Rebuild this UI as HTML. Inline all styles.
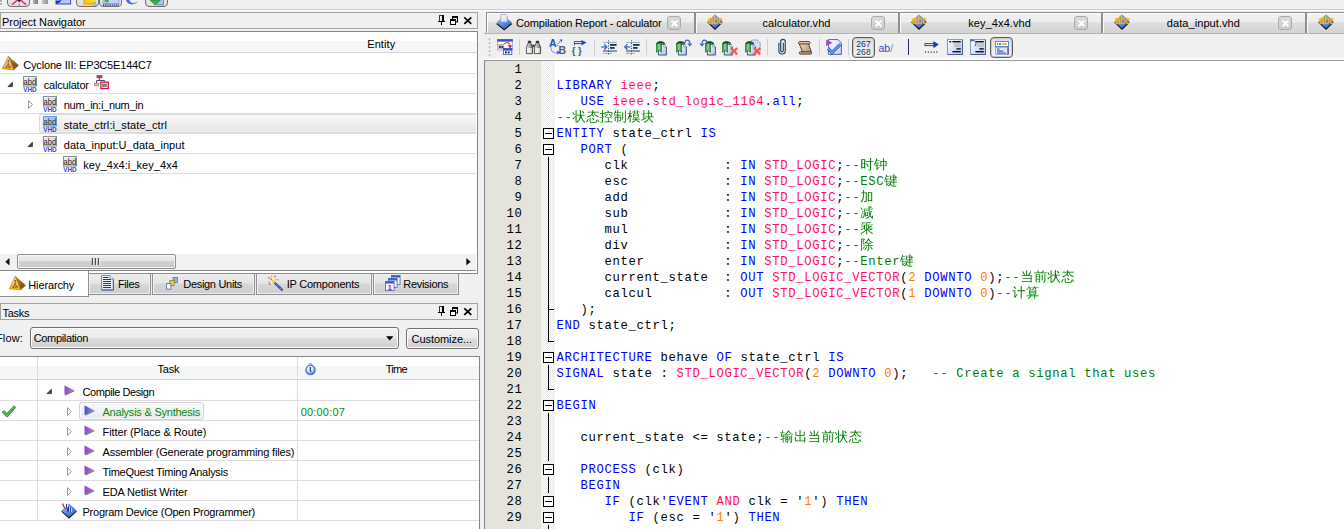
<!DOCTYPE html>
<html><head><meta charset="utf-8"><title>Quartus II</title><style>
*{box-sizing:border-box;margin:0;padding:0}
html,body{width:1344px;height:529px;overflow:hidden;background:#f0f0f0}
body{position:relative;font-family:"Liberation Sans", "Noto Sans CJK SC", sans-serif;font-size:11px;color:#000}
.a{position:absolute}
svg{overflow:visible}
.t{position:absolute;white-space:pre;line-height:14px;height:14px}
.code{position:absolute;white-space:pre;font-family:"Liberation Mono", "WenQuanYi Zen Hei", monospace;font-size:12.2px;letter-spacing:.68px;line-height:16px;height:16px;left:556.5px}
.ln{position:absolute;white-space:pre;font-family:"Liberation Mono", "WenQuanYi Zen Hei", monospace;font-size:12.2px;letter-spacing:.68px;line-height:16px;height:16px;text-align:right;width:38px;left:484.6px;color:#000}
.k{color:#0000ff}.y{color:#ff1060}.c{color:#008000}.n{color:#ff8000}
.cj{font-size:13.33px;letter-spacing:.35px}
.hl{position:absolute;height:1px;background:#dedede}
.tab{position:absolute;top:12px;height:21px;border:1px solid #8c8e94;border-bottom:none;box-shadow:inset 1px 1px 0 #fbfbfb;background:linear-gradient(#f3f3f3 0,#ececec 45%,#dddddd 50%,#d3d3d3 100%)}
.btab{position:absolute;top:273px;height:22px;border:1px solid #8c8e94;box-shadow:inset 1px 0 0 #f6f6f6,inset -1px -1px 0 #efefef;background:linear-gradient(#ececec 0,#e5e5e5 45%,#d7d7d7 50%,#cdcdcd 100%)}
.cb{position:absolute;width:14px;height:14px;border:1px solid #ababab;border-radius:3px;background:linear-gradient(#dcdcdc,#cbcbcb)}
.btn{position:absolute;border:1px solid #707070;border-radius:3px;box-shadow:inset 0 0 0 1px #fcfcfc;background:linear-gradient(#f2f2f2 0,#ebebeb 48%,#dddddd 52%,#cfcfcf 100%)}
</style></head><body>
<div class="a" style="left:0px;top:9px;width:1344px;height:1px;background:#cdcdcd;"></div>
<div class="a" style="left:0px;top:10px;width:1344px;height:1px;background:#fbfbfb;"></div>
<div class="a" style="left:0px;top:0px;width:2px;height:2px;background:#b0b0b0;"></div>
<div class="a" style="left:0px;top:3px;width:2px;height:2px;background:#b0b0b0;"></div>
<div class="a" style="left:7px;top:-10px;width:23px;height:17px;border:1px solid #707070;border-radius:4px;background:linear-gradient(#f4f4f4,#dcdcdc)"></div>
<svg class="a" style="left:12px;top:0px" width="15" height="6" viewBox="0 0 15 6"><path d="M0 4.600L5.600 0M14 4.600L8.400 0" stroke="#f03068" stroke-width="1.600"/><polygon points="5,0 9.400,0 7.200,2.600" fill="#1c2c6c"/><rect x="6.600" y="4" width="1.200" height="1.400" fill="#f03068"/></svg>
<div class="a" style="left:33px;top:0px;width:5px;height:4px;background:linear-gradient(90deg,#b0b0b0,#787878);"></div>
<div class="a" style="left:42px;top:0px;width:6px;height:4px;background:linear-gradient(90deg,#c8c8c8,#909090);"></div>
<svg class="a" style="left:56px;top:0px" width="15" height="5" viewBox="0 0 15 5"><rect x="0" y="-2" width="14.600" height="6" fill="#b4c8f0" stroke="#2c48c0" stroke-width="1"/><polygon points="0,4 0,1 6,0 3,3" fill="#1c38b0"/></svg>
<div class="a" style="left:76px;top:-10px;width:23px;height:17px;border:1px solid #707070;border-radius:4px;background:linear-gradient(#f4f4f4,#dcdcdc)"></div>
<svg class="a" style="left:83px;top:0px" width="13" height="6" viewBox="0 0 13 6"><polygon points="0,0 12.600,0 12.600,3 8,5 0,5" fill="#f8b818"/><polygon points="3,0 12.600,0 12.600,2 6,3" fill="#fcd848"/><circle cx="11.600" cy="4.400" r="1.300" fill="#fff" stroke="#3c4c7c" stroke-width=".6"/></svg>
<div class="a" style="left:99px;top:-10px;width:23px;height:17px;border:1px solid #707070;border-radius:4px;background:linear-gradient(#f4f4f4,#dcdcdc)"></div>
<svg class="a" style="left:103px;top:0px" width="16" height="6" viewBox="0 0 16 6"><rect x="0" y="-1" width="16" height="4.600" fill="#c4d4f4" stroke="#6c84c0" stroke-width=".6"/><rect x="1.600" y="0" width="4" height="2.400" fill="#4ca85c"/><path d="M0 5h16" stroke="#1c34c0" stroke-width="1.300" stroke-dasharray="1.300 .9"/></svg>
<svg class="a" style="left:126px;top:0px" width="13" height="5" viewBox="0 0 13 5"><path d="M0 0c1 5 8 6 12 1.600C8 4 4 3 3.400 0z" fill="#4c70d0"/></svg>
<div class="a" style="left:145px;top:-10px;width:23px;height:17px;border:1px solid #707070;border-radius:4px;background:linear-gradient(#f4f4f4,#dcdcdc)"></div>
<svg class="a" style="left:150px;top:0px" width="14" height="6" viewBox="0 0 14 6"><rect x="7" y="-1" width="6.600" height="6" fill="#a8c0f0" stroke="#4c68b0" stroke-width=".6"/><polygon points="0,0 10.400,0 5.200,5.200" fill="#3cb04c" stroke="#1c7c2c" stroke-width=".6"/></svg>
<div class="a" style="left:0;top:12px;width:478px;height:17px;border:1px solid #a3a3a3;background:#f0f0f0"></div>
<div class="t" style="left:2px;top:15px;letter-spacing:-0.037px">Project Navigator</div>
<svg class="a" style="left:437px;top:15px" width="9" height="11" viewBox="0 0 9 11"><rect x="2.5" y=".5" width="4" height="6" fill="#e8ecf0" stroke="#2c3844" stroke-width="1"/><rect x="5" y="0" width="2" height="7" fill="#000"/><rect x="1" y="6" width="7" height="1" fill="#000"/><rect x="4" y="7" width="1" height="3" fill="#000"/></svg><svg class="a" style="left:450px;top:16px" width="9" height="9" viewBox="0 0 9 9"><rect x="2.5" y="1" width="5" height="5" fill="#f0f0f0" stroke="#000"/><rect x="2" y="0" width="6" height="2" fill="#000"/><rect x=".5" y="4" width="5" height="4.5" fill="#fff" stroke="#000"/><rect x="0" y="3" width="6" height="2" fill="#000"/></svg><svg class="a" style="left:463px;top:16px" width="10" height="9" viewBox="0 0 10 9"><path d="M1.3 1.3l7 6.6M8.3 1.3l-7 6.6" stroke="#000" stroke-width="1.7"/></svg>
<div class="a" style="left:-1px;top:31px;width:479px;height:243px;border:1px solid #828790;background:#fff"></div>
<div class="a" style="left:0px;top:41px;width:477px;height:11px;background:#f5f6f8;"></div>
<div class="a" style="left:0px;top:52px;width:477px;height:1px;background:#d5d5d5;"></div>
<div class="t" style="left:367.25px;top:37px;letter-spacing:0.081px">Entity</div>
<div class="hl" style="left:0;top:73px;width:476px"></div>
<div class="hl" style="left:0;top:93px;width:476px"></div>
<div class="hl" style="left:0;top:113px;width:476px"></div>
<div class="hl" style="left:0;top:133px;width:476px"></div>
<div class="hl" style="left:0;top:153px;width:476px"></div>
<div class="hl" style="left:0;top:173px;width:476px"></div>
<div class="a" style="left:39px;top:114px;width:437px;height:19px;border:1px solid #dcdcdc;border-right:none;border-radius:3px 0 0 3px;box-shadow:inset 1px 1px 0 #f8f8f8,inset 0 -1px 0 #f0f0f0;background:linear-gradient(#f9f9f9,#e5e5e5)"></div>
<div class="t" style="left:23.25px;top:58px;letter-spacing:-0.174px">Cyclone III: EP3C5E144C7</div>
<div class="t" style="left:43.75px;top:78px;letter-spacing:-0.208px">calculator</div>
<div class="t" style="left:63.75px;top:98px;letter-spacing:-0.285px">num_in:i_num_in</div>
<div class="t" style="left:63.75px;top:118px;letter-spacing:0.103px">state_ctrl:i_state_ctrl</div>
<div class="t" style="left:63.75px;top:138px;letter-spacing:0.037px">data_input:U_data_input</div>
<div class="t" style="left:83.25px;top:158px;letter-spacing:0.070px">key_4x4:i_key_4x4</div>
<svg class="a" style="left:2px;top:56px" width="17" height="15" viewBox="0 0 17 15"><defs><linearGradient id="g1" x1="0" y1="0" x2="0" y2="1"><stop offset="0" stop-color="#fff27a"/><stop offset="1" stop-color="#f5a800"/></linearGradient><linearGradient id="g2" x1="0" y1="0" x2="1" y2="1"><stop offset="0" stop-color="#d08a20"/><stop offset="1" stop-color="#6a3c08"/></linearGradient></defs><polygon points="6.2,0.5 11.8,13.8 16.5,9.3" fill="url(#g2)" stroke="#7a5a30" stroke-width=".6"/><polygon points="6.2,0.5 0.4,12.8 11.8,13.8" fill="url(#g1)" stroke="#a08040" stroke-width=".7"/><path d="M6.2 5v3M6.2 8l-2 3M6.2 8l2 3" stroke="#3040c0" stroke-width=".8" fill="none"/><rect x="5.6" y="4" width="1.3" height="1.3" fill="#e02020"/><rect x="3.6" y="10.5" width="1.3" height="1.3" fill="#e02020"/><rect x="7.6" y="10.5" width="1.3" height="1.3" fill="#e02020"/><rect x="5.6" y="10.5" width="1.3" height="1.3" fill="#e02020"/></svg>
<svg class="a" style="left:23px;top:76px" width="15" height="16" viewBox="0 0 15 16"><defs><linearGradient id="g3" x1="0" y1="0" x2="1" y2="1"><stop offset="0" stop-color="#f4f7fc"/><stop offset="1" stop-color="#bdd0ec"/></linearGradient></defs><rect x=".5" y=".5" width="13" height="9.6" fill="url(#g3)" stroke="#8a9098"/><text x="7" y="8.7" font-family="Liberation Sans,sans-serif" font-size="9.4" text-anchor="middle" fill="#282828" textLength="12.8" lengthAdjust="spacingAndGlyphs">abd</text><text x="6.9" y="16" font-family="Liberation Sans,sans-serif" font-size="6.8" font-weight="bold" text-anchor="middle" fill="#2a4cc8" textLength="13.4" lengthAdjust="spacingAndGlyphs">VHD</text></svg>
<svg class="a" style="left:43px;top:96px" width="15" height="16" viewBox="0 0 15 16"><defs><linearGradient id="g4" x1="0" y1="0" x2="1" y2="1"><stop offset="0" stop-color="#f4f7fc"/><stop offset="1" stop-color="#bdd0ec"/></linearGradient></defs><rect x=".5" y=".5" width="13" height="9.6" fill="url(#g4)" stroke="#8a9098"/><text x="7" y="8.7" font-family="Liberation Sans,sans-serif" font-size="9.4" text-anchor="middle" fill="#282828" textLength="12.8" lengthAdjust="spacingAndGlyphs">abd</text><text x="6.9" y="16" font-family="Liberation Sans,sans-serif" font-size="6.8" font-weight="bold" text-anchor="middle" fill="#2a4cc8" textLength="13.4" lengthAdjust="spacingAndGlyphs">VHD</text></svg>
<svg class="a" style="left:43px;top:116px" width="15" height="16" viewBox="0 0 15 16"><defs><linearGradient id="g5" x1="0" y1="0" x2="1" y2="1"><stop offset="0" stop-color="#b8d4fa"/><stop offset="1" stop-color="#8ab6f0"/></linearGradient></defs><rect x=".5" y=".5" width="13" height="9.6" fill="url(#g5)" stroke="#6c9ce0"/><text x="7" y="8.7" font-family="Liberation Sans,sans-serif" font-size="9.4" text-anchor="middle" fill="#283848" textLength="12.8" lengthAdjust="spacingAndGlyphs">abd</text><text x="6.9" y="16" font-family="Liberation Sans,sans-serif" font-size="6.8" font-weight="bold" text-anchor="middle" fill="#2a4cc8" textLength="13.4" lengthAdjust="spacingAndGlyphs">VHD</text></svg>
<svg class="a" style="left:43px;top:136px" width="15" height="16" viewBox="0 0 15 16"><defs><linearGradient id="g6" x1="0" y1="0" x2="1" y2="1"><stop offset="0" stop-color="#f4f7fc"/><stop offset="1" stop-color="#bdd0ec"/></linearGradient></defs><rect x=".5" y=".5" width="13" height="9.6" fill="url(#g6)" stroke="#8a9098"/><text x="7" y="8.7" font-family="Liberation Sans,sans-serif" font-size="9.4" text-anchor="middle" fill="#282828" textLength="12.8" lengthAdjust="spacingAndGlyphs">abd</text><text x="6.9" y="16" font-family="Liberation Sans,sans-serif" font-size="6.8" font-weight="bold" text-anchor="middle" fill="#2a4cc8" textLength="13.4" lengthAdjust="spacingAndGlyphs">VHD</text></svg>
<svg class="a" style="left:63px;top:156px" width="15" height="16" viewBox="0 0 15 16"><defs><linearGradient id="g7" x1="0" y1="0" x2="1" y2="1"><stop offset="0" stop-color="#f4f7fc"/><stop offset="1" stop-color="#bdd0ec"/></linearGradient></defs><rect x=".5" y=".5" width="13" height="9.6" fill="url(#g7)" stroke="#8a9098"/><text x="7" y="8.7" font-family="Liberation Sans,sans-serif" font-size="9.4" text-anchor="middle" fill="#282828" textLength="12.8" lengthAdjust="spacingAndGlyphs">abd</text><text x="6.9" y="16" font-family="Liberation Sans,sans-serif" font-size="6.8" font-weight="bold" text-anchor="middle" fill="#2a4cc8" textLength="13.4" lengthAdjust="spacingAndGlyphs">VHD</text></svg>
<svg class="a" style="left:7px;top:81px" width="7" height="7" viewBox="0 0 7 7"><polygon points="5.4,1.2 5.4,5.6 1,5.6" fill="#484848" stroke="#2c2c2c" stroke-width=".8"/></svg>
<svg class="a" style="left:28px;top:100px" width="6" height="9" viewBox="0 0 6 9"><polygon points="0.5,0.5 4.5,4.5 0.5,8.5" fill="#fff" stroke="#989898" stroke-width="1"/></svg>
<svg class="a" style="left:27px;top:141px" width="7" height="7" viewBox="0 0 7 7"><polygon points="5.4,1.2 5.4,5.6 1,5.6" fill="#484848" stroke="#2c2c2c" stroke-width=".8"/></svg>
<svg class="a" style="left:94px;top:75px" width="16" height="15" viewBox="0 0 16 15"><path d="M5.5 2.5v3M2.5 8.5v-3h8v3" stroke="#44546a" stroke-width="1" fill="none"/><rect x="3" y=".5" width="5" height="2.4" fill="#e8204a" stroke="#5a6070" stroke-width=".7"/><rect x=".4" y="8.2" width="4.4" height="2.6" fill="#f4d63c" stroke="#707890" stroke-width=".7"/><rect x="6.9" y="7.1" width="7.4" height="6.4" fill="#fff" stroke="#e8003c" stroke-width="1.25"/><rect x="8.6" y="9" width="4" height="2.8" fill="#58a868" stroke="#507070" stroke-width=".6"/></svg>
<div class="a" style="left:0px;top:254px;width:476px;height:16px;background:#f1f1f1;"></div>
<div class="a" style="left:0px;top:270px;width:476px;height:1px;background:#828790;"></div>
<div class="a" style="left:17px;top:254px;width:159px;height:15px;border:1px solid #8e8e8e;border-radius:2px;box-shadow:inset 0 0 0 1px #f4f4f4;background:linear-gradient(#eeeeee 0,#e4e4e4 45%,#d1d1d1 50%,#c8c8c8 100%)"></div>
<svg class="a" style="left:5px;top:258px" width="5" height="8" viewBox="0 0 5 8"><polygon points="4.5,0 4.5,7.5 0.3,3.75" fill="#111"/></svg>
<svg class="a" style="left:466px;top:258px" width="5" height="8" viewBox="0 0 5 8"><polygon points="0.3,0 0.3,7.5 4.6,3.75" fill="#111"/></svg>
<svg class="a" style="left:92px;top:258px" width="9" height="8" viewBox="0 0 9 8"><rect x="-0.2" y="0" width="1.400" height="7" fill="#4c5056"/><rect x="1.2" y="0.5" width="1" height="7" fill="#f4f4f4"/><rect x="2.8" y="0" width="1.400" height="7" fill="#4c5056"/><rect x="4.2" y="0.5" width="1" height="7" fill="#f4f4f4"/><rect x="5.8" y="0" width="1.400" height="7" fill="#4c5056"/><rect x="7.2" y="0.5" width="1" height="7" fill="#f4f4f4"/></svg>
<div class="a" style="left:-1px;top:271px;width:90px;height:26px;border:1px solid #8c8e94;border-top:none;background:#fff"></div>
<div class="btab" style="left:88px;width:63px"></div>
<div class="btab" style="left:152px;width:103px"></div>
<div class="btab" style="left:256px;width:116px"></div>
<div class="btab" style="left:373px;width:86px"></div>
<div class="a" style="left:478px;top:272px;width:2px;height:26px;background:#f0f0f0;"></div>
<div class="t" style="left:28.25px;top:278px;letter-spacing:-0.120px">Hierarchy</div>
<div class="t" style="left:118px;top:277px;letter-spacing:-0.397px">Files</div>
<div class="t" style="left:183.25px;top:277px;letter-spacing:-0.301px">Design Units</div>
<div class="t" style="left:286.75px;top:277px;letter-spacing:-0.240px">IP Components</div>
<div class="t" style="left:403.25px;top:277px;letter-spacing:-0.299px">Revisions</div>
<svg class="a" style="left:9px;top:276px" width="17" height="15" viewBox="0 0 17 15"><defs><linearGradient id="g8" x1="0" y1="0" x2="0" y2="1"><stop offset="0" stop-color="#fff27a"/><stop offset="1" stop-color="#f5a800"/></linearGradient><linearGradient id="g9" x1="0" y1="0" x2="1" y2="1"><stop offset="0" stop-color="#d08a20"/><stop offset="1" stop-color="#6a3c08"/></linearGradient></defs><polygon points="6.2,0.5 11.8,13.8 16.5,9.3" fill="url(#g9)" stroke="#7a5a30" stroke-width=".6"/><polygon points="6.2,0.5 0.4,12.8 11.8,13.8" fill="url(#g8)" stroke="#a08040" stroke-width=".7"/><path d="M6.2 5v3M6.2 8l-2 3M6.2 8l2 3" stroke="#3040c0" stroke-width=".8" fill="none"/><rect x="5.6" y="4" width="1.3" height="1.3" fill="#e02020"/><rect x="3.6" y="10.5" width="1.3" height="1.3" fill="#e02020"/><rect x="7.6" y="10.5" width="1.3" height="1.3" fill="#e02020"/><rect x="5.6" y="10.5" width="1.3" height="1.3" fill="#e02020"/></svg>
<svg class="a" style="left:101px;top:275px" width="13" height="16" viewBox="0 0 13 16"><defs><linearGradient id="g10" x1="0" y1="0" x2="1" y2="1"><stop offset="0" stop-color="#fff"/><stop offset="1" stop-color="#dce6f8"/></linearGradient></defs><path d="M.6.6h8.4l3.4 3.4v11H.6z" fill="url(#g10)" stroke="#6078b8" stroke-width=".9"/><path d="M12.400 4v11H.6" fill="none" stroke="#3c5498" stroke-width=".9"/><path d="M9 .6v3.4h3.4" fill="#f4f7fe" stroke="#6078b8" stroke-width=".7"/><rect x="2" y="2" width="5.5" height="1" fill="#2030b4"/><rect x="2" y="4" width="8" height="1" fill="#2030b4"/><rect x="2" y="6" width="8" height="1" fill="#2030b4"/><rect x="2" y="8" width="8" height="1" fill="#2030b4"/><rect x="2" y="10" width="8" height="1" fill="#2030b4"/><rect x="2" y="12" width="8" height="1" fill="#2030b4"/></svg>
<svg class="a" style="left:166px;top:277px" width="12" height="13" viewBox="0 0 12 13"><rect x="7" y=".5" width="4.4" height="5" fill="#8cacdc" stroke="#5c78b0" stroke-width=".8"/><rect x="3.8" y="3.4" width="4.4" height="5" fill="#f6d030" stroke="#88803c" stroke-width=".8"/><rect x=".5" y="6.6" width="4.4" height="5.6" fill="#f4f8ff" stroke="#5a78b0" stroke-width=".9"/></svg>
<svg class="a" style="left:267px;top:275px" width="17" height="16" viewBox="0 0 17 16"><path d="M7.2 7.4l8.4 8" stroke="#2848b8" stroke-width="2.2"/><path d="M7.2 7.4l8.4 8" stroke="#9ab4f0" stroke-width="1" stroke-dasharray="1 1"/><path d="M5 5.2l3.6 1.2-1.6 2.2z" fill="#ffe020" stroke="#e8c000" stroke-width=".5"/><rect x="1.2" y="2.2" width="1.3" height="1.3" fill="#e03010"/><rect x="4" y="0.8" width="1.3" height="1.3" fill="#f08010"/><rect x="7.4" y="0.8" width="1.3" height="1.3" fill="#e03010"/><rect x="3.4" y="3.6" width="1.3" height="1.3" fill="#e03010"/><rect x="10.4" y="4.2" width="1.3" height="1.3" fill="#f08010"/><rect x="1.6" y="6.6" width="1.3" height="1.3" fill="#f08010"/><rect x="2.2" y="8.6" width="1.3" height="1.3" fill="#e03010"/><rect x="8.2" y="3.6" width="1.3" height="1.3" fill="#f0a020"/></svg>
<svg class="a" style="left:385px;top:275px" width="16" height="16" viewBox="0 0 16 16"><rect x="6.5" y="0.5" width="8.6" height="9" fill="#f4f7ff" stroke="#5a74b8" stroke-width=".9"/><rect x="6.5" y="0.5" width="8.6" height="2" fill="#3a5cc8"/><rect x="3.5" y="3.5" width="8.6" height="9" fill="#f4f7ff" stroke="#5a74b8" stroke-width=".9"/><rect x="3.5" y="3.5" width="8.6" height="2" fill="#3a5cc8"/><rect x="0.5" y="6.5" width="8.6" height="9" fill="#f4f7ff" stroke="#5a74b8" stroke-width=".9"/><rect x="0.5" y="6.5" width="8.6" height="2" fill="#3a5cc8"/><text x="4.8" y="14.6" font-family="Liberation Sans,sans-serif" font-size="7.5" font-weight="bold" text-anchor="middle" fill="#e0103c">1</text></svg>
<div class="a" style="left:0;top:303px;width:478px;height:17px;border:1px solid #a3a3a3;background:#f0f0f0"></div>
<div class="t" style="left:2.5px;top:306px;letter-spacing:-0.275px">Tasks</div>
<svg class="a" style="left:437px;top:306px" width="9" height="11" viewBox="0 0 9 11"><rect x="2.5" y=".5" width="4" height="6" fill="#e8ecf0" stroke="#2c3844" stroke-width="1"/><rect x="5" y="0" width="2" height="7" fill="#000"/><rect x="1" y="6" width="7" height="1" fill="#000"/><rect x="4" y="7" width="1" height="3" fill="#000"/></svg><svg class="a" style="left:450px;top:307px" width="9" height="9" viewBox="0 0 9 9"><rect x="2.5" y="1" width="5" height="5" fill="#f0f0f0" stroke="#000"/><rect x="2" y="0" width="6" height="2" fill="#000"/><rect x=".5" y="4" width="5" height="4.5" fill="#fff" stroke="#000"/><rect x="0" y="3" width="6" height="2" fill="#000"/></svg><svg class="a" style="left:463px;top:307px" width="10" height="9" viewBox="0 0 10 9"><path d="M1.3 1.3l7 6.6M8.3 1.3l-7 6.6" stroke="#000" stroke-width="1.7"/></svg>
<div class="t" style="left:-4px;top:331px;letter-spacing:0.144px">Flow:</div>
<div class="btn" style="left:30px;top:327px;width:369px;height:22px"></div>
<div class="t" style="left:33.75px;top:331px;letter-spacing:-0.349px">Compilation</div>
<svg class="a" style="left:386px;top:336px" width="8" height="5" viewBox="0 0 8 5"><polygon points="0,0.3 7.4,0.3 3.7,4.4" fill="#000"/></svg>
<div class="btn" style="left:406px;top:328px;width:73px;height:21px"></div>
<div class="t" style="left:411.5px;top:332px;letter-spacing:-0.053px">Customize...</div>
<div class="a" style="left:-1px;top:356px;width:481px;height:180px;border:1px solid #828790;background:#fff"></div>
<div class="a" style="left:0px;top:366px;width:479px;height:13px;background:#f5f6f8;"></div>
<div class="a" style="left:0px;top:379px;width:479px;height:1px;background:#d5d5d5;"></div>
<div class="hl" style="left:0;top:400px;width:479px"></div>
<div class="hl" style="left:0;top:420px;width:479px"></div>
<div class="hl" style="left:0;top:440px;width:479px"></div>
<div class="hl" style="left:0;top:460px;width:479px"></div>
<div class="hl" style="left:0;top:480px;width:479px"></div>
<div class="hl" style="left:0;top:500px;width:479px"></div>
<div class="hl" style="left:0;top:520px;width:479px"></div>
<div class="a" style="left:37px;top:357px;width:1px;height:164px;background:#dcdcdc;"></div>
<div class="a" style="left:297px;top:357px;width:1px;height:164px;background:#dcdcdc;"></div>
<div class="t" style="left:157.5px;top:362px;letter-spacing:-0.219px">Task</div>
<div class="t" style="left:385.75px;top:362px;letter-spacing:-0.699px">Time</div>
<svg class="a" style="left:305px;top:363px" width="11" height="12" viewBox="0 0 11 12"><defs><radialGradient id="g11" cx=".45" cy=".4" r=".6"><stop offset="0" stop-color="#fff"/><stop offset=".5" stop-color="#dce8ff"/><stop offset="1" stop-color="#2c58b0"/></radialGradient></defs><path d="M3.6 2.4l1-1.6h1.8l1 1.6" fill="none" stroke="#4a70b8" stroke-width=".9"/><circle cx="5.5" cy="7" r="4.7" fill="url(#g11)" stroke="#4a74c4" stroke-width="1.1"/><path d="M5.3 4v3.8l1 1.1" stroke="#1430a0" stroke-width="1.2" fill="none"/></svg>
<div class="a" style="left:79px;top:402px;width:125px;height:18px;border:1px solid #d4d4d4;border-radius:3px;box-shadow:inset 0 0 0 1px #fcfcfc;background:linear-gradient(#fafafa,#e9e9e9)"></div>
<div class="t" style="left:82.5px;top:385px;letter-spacing:-0.422px">Compile Design</div>
<div class="t" style="left:102.5px;top:405px;letter-spacing:-0.230px;color:#0a8a0a">Analysis &amp; Synthesis</div>
<div class="t" style="left:102.5px;top:425px;letter-spacing:-0.092px">Fitter (Place &amp; Route)</div>
<div class="t" style="left:102.5px;top:445px;letter-spacing:-0.183px">Assembler (Generate programming files)</div>
<div class="t" style="left:102.5px;top:465px;letter-spacing:-0.270px">TimeQuest Timing Analysis</div>
<div class="t" style="left:102.5px;top:485px;letter-spacing:-0.156px">EDA Netlist Writer</div>
<div class="t" style="left:82.5px;top:505px;letter-spacing:-0.245px">Program Device (Open Programmer)</div>
<div class="t" style="left:300.75px;top:405px;letter-spacing:0.178px;color:#0a8a0a">00:00:07</div>
<svg class="a" style="left:1.3px;top:405px" width="16" height="13" viewBox="0 0 16 13"><path d="M1 7.2l2.2-1.6 2.6 2.8L13 .8l1.8 1.6-8.6 9.8z" fill="#4cb848" stroke="#2f8a34" stroke-width=".8"/></svg>
<svg class="a" style="left:46px;top:388px" width="7" height="7" viewBox="0 0 7 7"><polygon points="5.4,1.2 5.4,5.6 1,5.6" fill="#484848" stroke="#2c2c2c" stroke-width=".8"/></svg>
<svg class="a" style="left:64px;top:385px" width="11" height="11" viewBox="0 0 11 11"><defs><linearGradient id="g12" x1="0" y1="0" x2="1" y2="0"><stop offset="0" stop-color="#7a50c8"/><stop offset="1" stop-color="#d070c8"/></linearGradient></defs><polygon points="1.3,2 11,6 1.3,10.8" fill="#585868" opacity=".75"/><polygon points=".5,.5 10,5.2 .5,9.8" fill="url(#g12)"/></svg>
<svg class="a" style="left:67px;top:407px" width="6" height="9" viewBox="0 0 6 9"><polygon points="0.5,0.5 4.5,4.5 0.5,8.5" fill="#fff" stroke="#989898" stroke-width="1"/></svg>
<svg class="a" style="left:84px;top:405px" width="11" height="11" viewBox="0 0 11 11"><defs><linearGradient id="g13" x1="0" y1="0" x2="1" y2="0"><stop offset="0" stop-color="#3a50e0"/><stop offset="1" stop-color="#b48ae0"/></linearGradient></defs><polygon points="1.3,2 11,6 1.3,10.8" fill="#585868" opacity=".75"/><polygon points=".5,.5 10,5.2 .5,9.8" fill="url(#g13)"/></svg>
<svg class="a" style="left:67px;top:427px" width="6" height="9" viewBox="0 0 6 9"><polygon points="0.5,0.5 4.5,4.5 0.5,8.5" fill="#fff" stroke="#989898" stroke-width="1"/></svg>
<svg class="a" style="left:84px;top:425px" width="11" height="11" viewBox="0 0 11 11"><defs><linearGradient id="g14" x1="0" y1="0" x2="1" y2="0"><stop offset="0" stop-color="#7a50c8"/><stop offset="1" stop-color="#d070c8"/></linearGradient></defs><polygon points="1.3,2 11,6 1.3,10.8" fill="#585868" opacity=".75"/><polygon points=".5,.5 10,5.2 .5,9.8" fill="url(#g14)"/></svg>
<svg class="a" style="left:67px;top:447px" width="6" height="9" viewBox="0 0 6 9"><polygon points="0.5,0.5 4.5,4.5 0.5,8.5" fill="#fff" stroke="#989898" stroke-width="1"/></svg>
<svg class="a" style="left:84px;top:445px" width="11" height="11" viewBox="0 0 11 11"><defs><linearGradient id="g15" x1="0" y1="0" x2="1" y2="0"><stop offset="0" stop-color="#7a50c8"/><stop offset="1" stop-color="#d070c8"/></linearGradient></defs><polygon points="1.3,2 11,6 1.3,10.8" fill="#585868" opacity=".75"/><polygon points=".5,.5 10,5.2 .5,9.8" fill="url(#g15)"/></svg>
<svg class="a" style="left:67px;top:467px" width="6" height="9" viewBox="0 0 6 9"><polygon points="0.5,0.5 4.5,4.5 0.5,8.5" fill="#fff" stroke="#989898" stroke-width="1"/></svg>
<svg class="a" style="left:84px;top:465px" width="11" height="11" viewBox="0 0 11 11"><defs><linearGradient id="g16" x1="0" y1="0" x2="1" y2="0"><stop offset="0" stop-color="#7a50c8"/><stop offset="1" stop-color="#d070c8"/></linearGradient></defs><polygon points="1.3,2 11,6 1.3,10.8" fill="#585868" opacity=".75"/><polygon points=".5,.5 10,5.2 .5,9.8" fill="url(#g16)"/></svg>
<svg class="a" style="left:67px;top:487px" width="6" height="9" viewBox="0 0 6 9"><polygon points="0.5,0.5 4.5,4.5 0.5,8.5" fill="#fff" stroke="#989898" stroke-width="1"/></svg>
<svg class="a" style="left:84px;top:485px" width="11" height="11" viewBox="0 0 11 11"><defs><linearGradient id="g17" x1="0" y1="0" x2="1" y2="0"><stop offset="0" stop-color="#7a50c8"/><stop offset="1" stop-color="#d070c8"/></linearGradient></defs><polygon points="1.3,2 11,6 1.3,10.8" fill="#585868" opacity=".75"/><polygon points=".5,.5 10,5.2 .5,9.8" fill="url(#g17)"/></svg>
<svg class="a" style="left:61px;top:503px" width="16" height="16" viewBox="0 0 16 16"><defs><linearGradient id="g18" x1="0" y1="0" x2="1" y2="1"><stop offset="0" stop-color="#9cc0f4"/><stop offset=".5" stop-color="#5a8ce0"/><stop offset="1" stop-color="#2c5cc0"/></linearGradient></defs><polygon points="8,1.8 15.8,8.6 8,15.8 0.2,8.6" fill="#141414"/><polygon points="8,0.4 15.6,7.4 8,14.2 0.4,7.4" fill="url(#g18)"/><path d="M1.5 .5l2 4.5h3v3.5" fill="none" stroke="#e0103c" stroke-width="1.2"/><path d="M4.4 .6v4M6.4 1.2v3.4M8.4 4v5M10.2 5v4" stroke="#fff" stroke-width="1"/><path d="M5.4 .8v4M7.4 3.4v5.4M9.3 4.6v4.4" stroke="#1828a0" stroke-width="1"/></svg>
<div class="a" style="left:484px;top:33px;width:860px;height:1px;background:#b4b4b4;"></div>
<div class="tab" style="left:486px;width:209px"></div>
<div class="tab" style="left:695px;width:204px"></div>
<div class="tab" style="left:899px;width:203px"></div>
<div class="tab" style="left:1102px;width:204px"></div>
<div class="tab" style="left:1306px;width:60px"></div>
<div class="t" style="left:516px;top:16px;letter-spacing:-0.178px">Compilation Report - calculator</div>
<div class="t" style="left:762.5px;top:16px;letter-spacing:0.052px">calculator.vhd</div>
<div class="t" style="left:968.25px;top:16px;letter-spacing:0.089px">key_4x4.vhd</div>
<div class="t" style="left:1166.75px;top:16px;letter-spacing:0.077px">data_input.vhd</div>
<svg class="a" style="left:495.5px;top:13.5px" width="17" height="17" viewBox="0 0 17 17"><defs><linearGradient id="g19" x1="0" y1="0" x2="1" y2="1"><stop offset="0" stop-color="#9cc0f4"/><stop offset=".5" stop-color="#5a8ce0"/><stop offset="1" stop-color="#2c5cc0"/></linearGradient></defs><defs><linearGradient id="g20" x1="0" y1="0" x2="1" y2="1"><stop offset="0" stop-color="#fff"/><stop offset="1" stop-color="#c8d4f0"/></linearGradient></defs><polygon points="8.2,3.6 16.2,10 8.2,16.6 0.2,10" fill="#141414"/><polygon points="8.2,2 16,8.6 8.2,15 0.4,8.6" fill="url(#g19)"/><path d="M4.8.5h5l1.6 1.6v6H4.8z" fill="url(#g20)" stroke="#8a9cc8" stroke-width=".7"/></svg>
<svg class="a" style="left:707px;top:14px" width="17" height="16" viewBox="0 0 17 16"><defs><linearGradient id="g21" x1="0" y1="0" x2="1" y2="1"><stop offset="0" stop-color="#9cc0f4"/><stop offset=".5" stop-color="#5a8ce0"/><stop offset="1" stop-color="#2c5cc0"/></linearGradient></defs><polygon points="8,1.8 15.8,8.6 8,15.9 0.2,8.6" fill="#141414"/><polygon points="8,0.2 15.6,7.4 8,14.2 0.4,7.4" fill="url(#g21)"/><text x="8.3" y="10.2" font-family="Liberation Sans,sans-serif" font-size="10.6" text-anchor="middle" fill="#ffb400" stroke="#ffb400" stroke-width=".35" textLength="15.2" lengthAdjust="spacingAndGlyphs">abc</text></svg>
<svg class="a" style="left:911px;top:14px" width="17" height="16" viewBox="0 0 17 16"><defs><linearGradient id="g22" x1="0" y1="0" x2="1" y2="1"><stop offset="0" stop-color="#9cc0f4"/><stop offset=".5" stop-color="#5a8ce0"/><stop offset="1" stop-color="#2c5cc0"/></linearGradient></defs><polygon points="8,1.8 15.8,8.6 8,15.9 0.2,8.6" fill="#141414"/><polygon points="8,0.2 15.6,7.4 8,14.2 0.4,7.4" fill="url(#g22)"/><text x="8.3" y="10.2" font-family="Liberation Sans,sans-serif" font-size="10.6" text-anchor="middle" fill="#ffb400" stroke="#ffb400" stroke-width=".35" textLength="15.2" lengthAdjust="spacingAndGlyphs">abc</text></svg>
<svg class="a" style="left:1114px;top:14px" width="17" height="16" viewBox="0 0 17 16"><defs><linearGradient id="g23" x1="0" y1="0" x2="1" y2="1"><stop offset="0" stop-color="#9cc0f4"/><stop offset=".5" stop-color="#5a8ce0"/><stop offset="1" stop-color="#2c5cc0"/></linearGradient></defs><polygon points="8,1.8 15.8,8.6 8,15.9 0.2,8.6" fill="#141414"/><polygon points="8,0.2 15.6,7.4 8,14.2 0.4,7.4" fill="url(#g23)"/><text x="8.3" y="10.2" font-family="Liberation Sans,sans-serif" font-size="10.6" text-anchor="middle" fill="#ffb400" stroke="#ffb400" stroke-width=".35" textLength="15.2" lengthAdjust="spacingAndGlyphs">abc</text></svg>
<svg class="a" style="left:1318px;top:14px" width="17" height="16" viewBox="0 0 17 16"><defs><linearGradient id="g24" x1="0" y1="0" x2="1" y2="1"><stop offset="0" stop-color="#9cc0f4"/><stop offset=".5" stop-color="#5a8ce0"/><stop offset="1" stop-color="#2c5cc0"/></linearGradient></defs><polygon points="8,1.8 15.8,8.6 8,15.9 0.2,8.6" fill="#141414"/><polygon points="8,0.2 15.6,7.4 8,14.2 0.4,7.4" fill="url(#g24)"/><text x="8.3" y="10.2" font-family="Liberation Sans,sans-serif" font-size="10.6" text-anchor="middle" fill="#ffb400" stroke="#ffb400" stroke-width=".35" textLength="15.2" lengthAdjust="spacingAndGlyphs">abc</text></svg>
<div class="cb" style="left:667px;top:16px"></div><svg class="a" style="left:670.5px;top:19.5px" width="7" height="7" viewBox="0 0 7 7"><path d="M.6.6l5.8 5.8M6.4.6L.6 6.4" stroke="#fff" stroke-width="2"/></svg>
<div class="cb" style="left:871px;top:16px"></div><svg class="a" style="left:874.5px;top:19.5px" width="7" height="7" viewBox="0 0 7 7"><path d="M.6.6l5.8 5.8M6.4.6L.6 6.4" stroke="#fff" stroke-width="2"/></svg>
<div class="cb" style="left:1074px;top:16px"></div><svg class="a" style="left:1077.5px;top:19.5px" width="7" height="7" viewBox="0 0 7 7"><path d="M.6.6l5.8 5.8M6.4.6L.6 6.4" stroke="#fff" stroke-width="2"/></svg>
<div class="cb" style="left:1278px;top:16px"></div><svg class="a" style="left:1281.5px;top:19.5px" width="7" height="7" viewBox="0 0 7 7"><path d="M.6.6l5.8 5.8M6.4.6L.6 6.4" stroke="#fff" stroke-width="2"/></svg>
<div class="a" style="left:484px;top:34px;width:860px;height:25px;background:#f0f0f0;"></div>
<div class="a" style="left:484px;top:58px;width:860px;height:2px;background:#fbfbfb;"></div>
<div class="a" style="left:484px;top:60px;width:860px;height:1px;background:#9a9a9a;"></div>
<svg class="a" style="left:488px;top:38px" width="3" height="20" viewBox="0 0 3 20"><rect x="1" y="0.3" width="1.4" height="1.4" fill="#a8a8a8"/><rect x="0" y="1.3" width="1" height="1" fill="#d0d0d0"/><rect x="1" y="4.3" width="1.4" height="1.4" fill="#a8a8a8"/><rect x="0" y="5.3" width="1" height="1" fill="#d0d0d0"/><rect x="1" y="8.3" width="1.4" height="1.4" fill="#a8a8a8"/><rect x="0" y="9.3" width="1" height="1" fill="#d0d0d0"/><rect x="1" y="12.3" width="1.4" height="1.4" fill="#a8a8a8"/><rect x="0" y="13.3" width="1" height="1" fill="#d0d0d0"/><rect x="1" y="16.3" width="1.4" height="1.4" fill="#a8a8a8"/><rect x="0" y="17.3" width="1" height="1" fill="#d0d0d0"/></svg>
<svg class="a" style="left:497px;top:39px" width="16" height="16" viewBox="0 0 16 16"><rect x=".5" y=".5" width="15" height="10.5" fill="#fff" stroke="#90a4d8" stroke-width=".8"/><rect x=".2" y=".2" width="15.6" height="2.4" fill="#2c54d0"/><rect x="1.2" y="5" width="6" height="5" fill="#b8b8b8"/><rect x="2.2" y="7" width="1.6" height="2" fill="#303030"/><rect x="4.6" y="7" width="1.6" height="2" fill="#303030"/><path d="M7.4 5.2c0-2 5.6-2.6 5.6 1.4" fill="none" stroke="#e04070" stroke-width="1.1"/><polygon points="10.6,6.2 15.4,6.2 13,9.4" fill="#d81848"/><rect x="6.4" y="9.6" width="8.4" height="6" fill="#fff" stroke="#4868c8" stroke-width=".9"/><rect x="6" y="9.2" width="9.2" height="2.4" fill="#2c54d0"/><rect x="8" y="12.4" width="1.8" height="2" fill="#202040"/><rect x="10.8" y="12.4" width="1.8" height="2" fill="#202040"/></svg>
<div class="a" style="left:519px;top:39px;width:1px;height:16px;background:#cfcfcf"></div>
<svg class="a" style="left:526px;top:40px" width="16" height="14" viewBox="0 0 16 14"><defs><linearGradient id="g25" x1="0" y1="0" x2="1" y2="0"><stop offset="0" stop-color="#f0f0ec"/><stop offset=".45" stop-color="#b8b8b0"/><stop offset="1" stop-color="#5c5c54"/></linearGradient></defs><path d="M2.2 1.2h2.6v2l1.8 4v6.4H0.4V7.2l1.8-4z" fill="url(#g25)" stroke="#4c4c44" stroke-width=".9"/><rect x="1.4" y="8" width="4.4" height="5" fill="#fafaf6" opacity=".8"/><rect x="2.1" y="1" width="2.800" height="2" fill="#303030"/><path d="M10.2 1.2h2.6v2l1.8 4v6.4H8.4V7.2l1.8-4z" fill="url(#g25)" stroke="#4c4c44" stroke-width=".9"/><rect x="9.4" y="8" width="4.4" height="5" fill="#fafaf6" opacity=".8"/><rect x="10.1" y="1" width="2.800" height="2" fill="#303030"/><rect x="6" y="4.6" width="3" height="2.6" fill="#505048"/></svg>
<svg class="a" style="left:549px;top:39px" width="17" height="16" viewBox="0 0 17 16"><text x="0" y="8" font-family="Liberation Sans,sans-serif" font-size="10.5" font-weight="bold" fill="#1c50b4">A</text><text x="9.6" y="15" font-family="Liberation Sans,sans-serif" font-size="10.5" font-weight="bold" fill="#586064">B</text><path d="M2 8.6c0 4 3 5.6 7 5.2" fill="none" stroke="#2c50d0" stroke-width="1.1" stroke-dasharray="1 1.1"/><polygon points="8.4,11.6 11,13.6 8.4,15.6" fill="#2c50d0"/><path d="M8.6 7c.2-2.6 1.4-4 3.4-4.8" fill="none" stroke="#2c50d0" stroke-width="1.1" stroke-dasharray="1 1.1"/><polygon points="10.6,.4 13.4,.6 12.6,3.4" fill="#2c50d0"/></svg>
<svg class="a" style="left:572px;top:39.5px" width="15" height="16" viewBox="0 0 15 16"><path d="M2.4 1.6h7.4" stroke="#2c48c8" stroke-width="1"/><path d="M2.4 3.6h7.4" stroke="#2c48c8" stroke-width="1"/><polygon points="9.4,0 14.6,2.6 9.4,5.4" fill="#2c48c8"/><path d="M2.4 1.4v4" stroke="#44546a" stroke-width="1"/><text x="-.2" y="13.6" font-family="Liberation Sans,sans-serif" font-size="9.6" font-weight="bold" fill="#44546a" textLength="10" lengthAdjust="spacingAndGlyphs">{ }</text></svg>
<div class="a" style="left:594px;top:39px;width:1px;height:16px;background:#cfcfcf"></div>
<svg class="a" style="left:600.5px;top:39.5px" width="17" height="16" viewBox="0 0 17 16"><path d="M2 2.5h14" stroke="#9cb0cc" stroke-width="1"/><rect x="9" y="4" width="6.6" height="1.8" fill="#1c3454"/><rect x="9" y="7" width="4.6" height="1.8" fill="#1c3454"/><path d="M2 11h14" stroke="#44607c" stroke-width="1.2"/><path d="M2 13.4h9" stroke="#9cb0cc" stroke-width="1"/><path d="M7.5 .4v15" stroke="#28406c" stroke-width="1" stroke-dasharray="1 1.6"/><path d="M.2 7h5.4" stroke="#2c58e0" stroke-width="1.2"/><path d="M3.2 4.4L5.8 7 3.2 9.6" fill="none" stroke="#2c58e0" stroke-width="1.3"/></svg>
<svg class="a" style="left:623.5px;top:39.5px" width="17" height="16" viewBox="0 0 17 16"><path d="M2 2.5h14" stroke="#9cb0cc" stroke-width="1"/><rect x="9" y="4" width="6.6" height="1.8" fill="#1c3454"/><rect x="9" y="7" width="4.6" height="1.8" fill="#1c3454"/><path d="M2 11h14" stroke="#44607c" stroke-width="1.2"/><path d="M2 13.4h9" stroke="#9cb0cc" stroke-width="1"/><path d="M7.5 .4v15" stroke="#28406c" stroke-width="1" stroke-dasharray="1 1.6"/><path d="M1 7h5.4" stroke="#2c58e0" stroke-width="1.2"/><path d="M3.4 4.4L.8 7l2.6 2.6" fill="none" stroke="#2c58e0" stroke-width="1.3"/></svg>
<div class="a" style="left:646px;top:39px;width:1px;height:16px;background:#cfcfcf"></div>
<svg class="a" style="left:655.5px;top:40.5px" width="11" height="15" viewBox="0 0 11 15"><defs><linearGradient id="g26" x1="0" y1="0" x2="1" y2="1"><stop offset="0" stop-color="#fff"/><stop offset="1" stop-color="#a8c0ec"/></linearGradient><linearGradient id="g27" x1="0" y1="0" x2="1" y2="0"><stop offset="0" stop-color="#2c7c34"/><stop offset=".5" stop-color="#98dc98"/><stop offset="1" stop-color="#2c7c34"/></linearGradient></defs><g transform="translate(0 0)"><path d="M2.400 3.400h5.400l2.600 2.600v8H2.400z" fill="url(#g26)" stroke="#2c4468" stroke-width=".9"/><path d="M7.800 3.400v2.600h2.600" fill="#fff" stroke="#5c74a0" stroke-width=".6"/><path d="M.5 11.400V3.400C.5 1.600 2 .6 3.600 .6h1.900v10.800L3 9.200z" fill="url(#g27)" stroke="#1c6c2c" stroke-width=".6"/><path d="M.4 4.200V3.400C.6 1.200 2.400 .4 4 .4h2c2 0 3.200 1.400 3.600 3.800C8.400 2.800 7 2.300 5.400 2.500H3.200C1.800 2.500 .9 3.100 .4 4.200z" fill="#0c5018"/></g></svg>
<svg class="a" style="left:675.5px;top:40.5px" width="17" height="15" viewBox="0 0 17 15"><defs><linearGradient id="g28" x1="0" y1="0" x2="1" y2="1"><stop offset="0" stop-color="#fff"/><stop offset="1" stop-color="#a8c0ec"/></linearGradient><linearGradient id="g29" x1="0" y1="0" x2="1" y2="0"><stop offset="0" stop-color="#2c7c34"/><stop offset=".5" stop-color="#98dc98"/><stop offset="1" stop-color="#2c7c34"/></linearGradient></defs><g transform="translate(0 0)"><path d="M2.400 3.400h5.400l2.600 2.600v8H2.400z" fill="url(#g28)" stroke="#2c4468" stroke-width=".9"/><path d="M7.800 3.400v2.600h2.600" fill="#fff" stroke="#5c74a0" stroke-width=".6"/><path d="M.5 11.400V3.400C.5 1.600 2 .6 3.600 .6h1.900v10.800L3 9.200z" fill="url(#g29)" stroke="#1c6c2c" stroke-width=".6"/><path d="M.4 4.200V3.400C.6 1.200 2.400 .4 4 .4h2c2 0 3.200 1.400 3.600 3.800C8.400 2.800 7 2.300 5.400 2.500H3.200C1.800 2.500 .9 3.100 .4 4.200z" fill="#0c5018"/></g><path d="M8.800 2c.4-4 5-3.800 5 .6" fill="none" stroke="#3c60d8" stroke-width="1.200"/><polygon points="11.200,2.400 16.400,2.400 13.800,5.600" fill="#3c60d8"/></svg>
<svg class="a" style="left:704.5px;top:40.5px" width="17" height="15" viewBox="0 0 17 15"><defs><linearGradient id="g30" x1="0" y1="0" x2="1" y2="1"><stop offset="0" stop-color="#fff"/><stop offset="1" stop-color="#a8c0ec"/></linearGradient><linearGradient id="g31" x1="0" y1="0" x2="1" y2="0"><stop offset="0" stop-color="#2c7c34"/><stop offset=".5" stop-color="#98dc98"/><stop offset="1" stop-color="#2c7c34"/></linearGradient></defs><g transform="translate(0 0)"><path d="M2.400 3.400h5.400l2.600 2.600v8H2.400z" fill="url(#g30)" stroke="#2c4468" stroke-width=".9"/><path d="M7.800 3.400v2.600h2.600" fill="#fff" stroke="#5c74a0" stroke-width=".6"/><path d="M.5 11.400V3.400C.5 1.600 2 .6 3.600 .6h1.900v10.800L3 9.200z" fill="url(#g31)" stroke="#1c6c2c" stroke-width=".6"/><path d="M.4 4.200V3.400C.6 1.200 2.400 .4 4 .4h2c2 0 3.200 1.400 3.600 3.800C8.400 2.800 7 2.300 5.400 2.500H3.200C1.800 2.500 .9 3.100 .4 4.200z" fill="#0c5018"/></g><path d="M2 2c-.4-4-5-3.800-5 .6" fill="none" stroke="#3c60d8" stroke-width="1.200"/><polygon points="-5.600,2.400 -.4,2.400 -3,5.600" fill="#3c60d8"/></svg>
<svg class="a" style="left:721.7px;top:40.5px" width="17" height="16" viewBox="0 0 17 16"><defs><linearGradient id="g32" x1="0" y1="0" x2="1" y2="1"><stop offset="0" stop-color="#fff"/><stop offset="1" stop-color="#a8c0ec"/></linearGradient><linearGradient id="g33" x1="0" y1="0" x2="1" y2="0"><stop offset="0" stop-color="#2c7c34"/><stop offset=".5" stop-color="#98dc98"/><stop offset="1" stop-color="#2c7c34"/></linearGradient></defs><g transform="translate(0 0)"><path d="M2.400 3.400h5.400l2.600 2.600v8H2.400z" fill="url(#g32)" stroke="#2c4468" stroke-width=".9"/><path d="M7.800 3.400v2.600h2.600" fill="#fff" stroke="#5c74a0" stroke-width=".6"/><path d="M.5 11.400V3.400C.5 1.600 2 .6 3.600 .6h1.900v10.800L3 9.200z" fill="url(#g33)" stroke="#1c6c2c" stroke-width=".6"/><path d="M.4 4.200V3.400C.6 1.200 2.400 .4 4 .4h2c2 0 3.200 1.400 3.600 3.800C8.400 2.800 7 2.300 5.400 2.500H3.200C1.800 2.500 .9 3.100 .4 4.200z" fill="#0c5018"/></g><path d="M8.8 7l6.400 6.400M15.2 7l-6.400 6.400" stroke="#f85858" stroke-width="2.300"/></svg>
<svg class="a" style="left:744.5px;top:40.5px" width="17" height="16" viewBox="0 0 17 16"><path d="M6.400 -1h6.200l2.600 2.600v9.400h-8.800z" fill="#d4def4" stroke="#8c9cc4" stroke-width=".8"/><path d="M12.600 -1v2.600h2.600" fill="#fff" stroke="#8c9cc4" stroke-width=".6"/><defs><linearGradient id="g34" x1="0" y1="0" x2="1" y2="1"><stop offset="0" stop-color="#fff"/><stop offset="1" stop-color="#a8c0ec"/></linearGradient><linearGradient id="g35" x1="0" y1="0" x2="1" y2="0"><stop offset="0" stop-color="#2c7c34"/><stop offset=".5" stop-color="#98dc98"/><stop offset="1" stop-color="#2c7c34"/></linearGradient></defs><g transform="translate(0 0)"><path d="M2.400 3.400h5.400l2.600 2.600v8H2.400z" fill="url(#g34)" stroke="#2c4468" stroke-width=".9"/><path d="M7.800 3.400v2.600h2.600" fill="#fff" stroke="#5c74a0" stroke-width=".6"/><path d="M.5 11.400V3.400C.5 1.600 2 .6 3.600 .6h1.900v10.800L3 9.200z" fill="url(#g35)" stroke="#1c6c2c" stroke-width=".6"/><path d="M.4 4.200V3.400C.6 1.200 2.400 .4 4 .4h2c2 0 3.200 1.400 3.600 3.800C8.400 2.800 7 2.300 5.400 2.500H3.200C1.800 2.500 .9 3.100 .4 4.200z" fill="#0c5018"/></g><path d="M8.8 7l6.400 6.400M15.2 7l-6.400 6.400" stroke="#f85858" stroke-width="2.300"/></svg>
<div class="a" style="left:767px;top:39px;width:1px;height:16px;background:#cfcfcf"></div>
<svg class="a" style="left:777.5px;top:39px" width="9" height="16" viewBox="0 0 9 16"><path d="M.9 3.800V12C.9 16 7.250 16 7.250 12V2.500C7.250 -.3 2.700 -.3 2.700 2.500V11.500C2.700 13.200 5.300 13.200 5.300 11.500V3.800" fill="none" stroke="#24446c" stroke-width="1.150"/></svg>
<svg class="a" style="left:798px;top:40.5px" width="15" height="14" viewBox="0 0 15 14"><defs><linearGradient id="g36" x1="0" y1="0" x2="1" y2="1"><stop offset="0" stop-color="#f0e4c4"/><stop offset="1" stop-color="#9c9078"/></linearGradient></defs><polygon points="1.2,2.6 10.4,2.6 13.4,11.2 4.6,11.2" fill="url(#g36)" stroke="#6c3424" stroke-width="1"/><rect x=".5" y=".6" width="11.5" height="2.300" rx="1.100" fill="#e8dcbc" stroke="#6c3424" stroke-width="1"/><rect x="1.200" y="10.800" width="12.500" height="2.300" rx="1.100" fill="#b4a88c" stroke="#6c3424" stroke-width="1"/></svg>
<div class="a" style="left:819px;top:39px;width:1px;height:16px;background:#cfcfcf"></div>
<svg class="a" style="left:826px;top:39px" width="16" height="16" viewBox="0 0 16 16"><defs><linearGradient id="g37" x1="0" y1="0" x2="1" y2="1"><stop offset="0" stop-color="#fff"/><stop offset="1" stop-color="#c0d0f0"/></linearGradient></defs><path d="M2.600 .6h9.400l3.400 3.400v11.400H2.600z" fill="url(#g37)" stroke="#3c5898" stroke-width=".9"/><polygon points=".2,.6 6.600,3.800 .2,7" fill="#a048c8"/><path d="M2 9.400l4 4.200 8.400-8.200" fill="none" stroke="#2c54c0" stroke-width="3"/><path d="M2 9.400l4 4.200 8.400-8.200" fill="none" stroke="#6c9cf0" stroke-width="1.700"/></svg>
<div class="a" style="left:848px;top:39px;width:1px;height:16px;background:#cfcfcf"></div>
<div class="a" style="left:852px;top:37px;width:23px;height:21px;border:1px solid #5c5c5c;border-radius:4px;background:linear-gradient(#dcdcdc,#f6f6f6);box-shadow:inset 0 0 0 1px #c8c8c8"></div>
<div class="a" style="left:852px;top:39.5px;width:23px;text-align:center;font-size:8.6px;line-height:8px;color:#1c3058;white-space:pre">267
268</div>
<div class="a" style="left:878.5px;top:41px;font-size:10.5px;line-height:14px;color:#2c4cc0;white-space:pre">ab<span style="color:#8c8c8c">/</span></div>
<div class="a" style="left:908px;top:39px;width:1px;height:16px;background:#1c305c"></div>
<svg class="a" style="left:925px;top:41px" width="14" height="12" viewBox="0 0 14 12"><path d="M0 2.600h9M0 4.600h9" stroke="#2c44c0" stroke-width="1"/><path d="M0 2.200v3" stroke="#2c44c0" stroke-width="1"/><polygon points="8.400,0 13.800,3.600 8.400,7.200" fill="#2438b0"/><path d="M0 11.200h14" stroke="#1c2c5c" stroke-width="1.200" stroke-dasharray="1.100 1.700"/></svg>
<svg class="a" style="left:947px;top:39px" width="16" height="16" viewBox="0 0 16 16"><defs><linearGradient id="g38" x1="0" y1="0" x2="1" y2="1"><stop offset="0" stop-color="#fff"/><stop offset="1" stop-color="#b4c8f0"/></linearGradient></defs><rect x=".5" y=".5" width="15" height="15" fill="url(#g38)" stroke="#7890c4" stroke-width=".9"/><path d="M15.500 1v14.500H1" fill="none" stroke="#3c5488" stroke-width=".9"/><rect x="5.400" y="2" width="8.400" height="1.400" fill="#101010"/><rect x="6.800" y="4.600" width="7" height="1" fill="#a8ac9c"/><rect x="6.800" y="6.600" width="7" height="1" fill="#a8ac9c"/><rect x="9.400" y="9.200" width="4.400" height="1.400" fill="#101010"/><rect x="5.400" y="12" width="8.400" height="1.400" fill="#101010"/><rect x="2.400" y="2" width="1.800" height="1.400" fill="#101010"/></svg>
<svg class="a" style="left:970px;top:39px" width="16" height="16" viewBox="0 0 16 16"><defs><linearGradient id="g39" x1="0" y1="0" x2="1" y2="1"><stop offset="0" stop-color="#fff"/><stop offset="1" stop-color="#b4c8f0"/></linearGradient></defs><rect x=".5" y=".5" width="15" height="15" fill="url(#g39)" stroke="#7890c4" stroke-width=".9"/><path d="M15.500 1v14.500H1" fill="none" stroke="#3c5488" stroke-width=".9"/><rect x="5.400" y="2" width="8.400" height="1.400" fill="#101010"/><rect x="6.800" y="4.600" width="7" height="1" fill="#a8ac9c"/><rect x="6.800" y="6.600" width="7" height="1" fill="#a8ac9c"/><rect x="9.400" y="9.200" width="4.400" height="1.400" fill="#101010"/><rect x="5.400" y="12" width="8.400" height="1.400" fill="#101010"/><path d="M1.800 1.800c3.600-1.400 5.600 2.200 3 5.400" fill="none" stroke="#3c64d8" stroke-width="1.050"/><polygon points=".2,.2 3.600,.6 .8,3.200" fill="#3c64d8"/></svg>
<div class="a" style="left:990px;top:37px;width:23px;height:21px;border:1px solid #5c5c5c;border-radius:4px;background:linear-gradient(#dcdcdc,#f6f6f6);box-shadow:inset 0 0 0 1px #c8c8c8"></div>
<svg class="a" style="left:995px;top:40.5px" width="14" height="14" viewBox="0 0 14 14"><rect x=".5" y=".5" width="13" height="5" fill="#fff" stroke="#5c84e0" stroke-width="1"/><rect x="2" y="2.400" width="1.200" height="1.200" fill="#203050"/><rect x="4" y="2.400" width="2" height="1.200" fill="#203050"/><rect x="7" y="2.400" width="4.800" height="1.300" fill="#f08818"/><rect x=".5" y="6.600" width="13" height="7" fill="#dce6fa" stroke="#7c9ce0" stroke-width=".7"/><rect x="12.400" y="6.400" width="1.200" height="7.400" fill="#3c4c6c"/><rect x="2" y="7.600" width="2.600" height="1" fill="#2c4c7c"/><rect x="2" y="9.600" width="6.400" height="1" fill="#2c4c7c"/><rect x="2" y="11.600" width="9" height="1" fill="#2c4c7c"/></svg>
<div class="a" style="left:484px;top:61px;width:860px;height:468px;background:#fff;"></div>
<div class="a" style="left:484px;top:61px;width:1px;height:468px;background:#828790;"></div>
<div class="a" style="left:485px;top:61px;width:56px;height:468px;background:#e4e4dc;"></div>
<div class="a" style="left:541px;top:61px;width:14px;height:468px;background:#fff;background-image:conic-gradient(#fff 25%,#e6e6e6 0 50%,#fff 0 75%,#e6e6e6 0);background-size:2px 2px"></div>
<div class="ln" style="top:62px">1</div>
<div class="ln" style="top:78px">2</div>
<div class="code" style="top:78px"><span class="k">LIBRARY</span> <span class="y">ieee</span>;</div>
<div class="ln" style="top:94px">3</div>
<div class="code" style="top:94px">   <span class="k">USE</span> <span class="y">ieee</span>.<span class="y">std_logic_1164</span>.<span class="k">all</span>;</div>
<div class="ln" style="top:110px">4</div>
<div class="code" style="top:110px"><span class="c">--<span class="cj">状态控制模块</span></span></div>
<div class="ln" style="top:126px">5</div>
<div class="code" style="top:126px"><span class="k">ENTITY</span> state_ctrl <span class="k">IS</span></div>
<div class="ln" style="top:142px">6</div>
<div class="code" style="top:142px">   <span class="k">PORT</span> (</div>
<div class="ln" style="top:158px">7</div>
<div class="code" style="top:158px">      clk            : <span class="k">IN</span> <span class="y">STD_LOGIC</span>;<span class="c">--<span class="cj">时钟</span></span></div>
<div class="ln" style="top:174px">8</div>
<div class="code" style="top:174px">      esc            : <span class="k">IN</span> <span class="y">STD_LOGIC</span>;<span class="c">--ESC<span class="cj">键</span></span></div>
<div class="ln" style="top:190px">9</div>
<div class="code" style="top:190px">      add            : <span class="k">IN</span> <span class="y">STD_LOGIC</span>;<span class="c">--<span class="cj">加</span></span></div>
<div class="ln" style="top:206px">10</div>
<div class="code" style="top:206px">      sub            : <span class="k">IN</span> <span class="y">STD_LOGIC</span>;<span class="c">--<span class="cj">减</span></span></div>
<div class="ln" style="top:222px">11</div>
<div class="code" style="top:222px">      mul            : <span class="k">IN</span> <span class="y">STD_LOGIC</span>;<span class="c">--<span class="cj">乘</span></span></div>
<div class="ln" style="top:238px">12</div>
<div class="code" style="top:238px">      div            : <span class="k">IN</span> <span class="y">STD_LOGIC</span>;<span class="c">--<span class="cj">除</span></span></div>
<div class="ln" style="top:254px">13</div>
<div class="code" style="top:254px">      enter          : <span class="k">IN</span> <span class="y">STD_LOGIC</span>;<span class="c">--Enter<span class="cj">键</span></span></div>
<div class="ln" style="top:270px">14</div>
<div class="code" style="top:270px">      current_state  : <span class="k">OUT</span> <span class="y">STD_LOGIC_VECTOR</span>(<span class="n">2</span> <span class="k">DOWNTO</span> <span class="n">0</span>);<span class="c">--<span class="cj">当前状态</span></span></div>
<div class="ln" style="top:286px">15</div>
<div class="code" style="top:286px">      calcul         : <span class="k">OUT</span> <span class="y">STD_LOGIC_VECTOR</span>(<span class="n">1</span> <span class="k">DOWNTO</span> <span class="n">0</span>)<span class="c">--<span class="cj">计算</span></span></div>
<div class="ln" style="top:302px">16</div>
<div class="code" style="top:302px">   );</div>
<div class="ln" style="top:318px">17</div>
<div class="code" style="top:318px"><span class="k">END</span> state_ctrl;</div>
<div class="ln" style="top:334px">18</div>
<div class="ln" style="top:350px">19</div>
<div class="code" style="top:350px"><span class="k">ARCHITECTURE</span> behave <span class="k">OF</span> state_ctrl <span class="k">IS</span></div>
<div class="ln" style="top:366px">20</div>
<div class="code" style="top:366px"><span class="k">SIGNAL</span> state : <span class="y">STD_LOGIC_VECTOR</span>(<span class="n">2</span> <span class="k">DOWNTO</span> <span class="n">0</span>);   <span class="c">-- Create a signal that uses</span></div>
<div class="ln" style="top:382px">21</div>
<div class="ln" style="top:398px">22</div>
<div class="code" style="top:398px"><span class="k">BEGIN</span></div>
<div class="ln" style="top:414px">23</div>
<div class="ln" style="top:430px">24</div>
<div class="code" style="top:430px">   current_state &lt;= state;<span class="c">--<span class="cj">输出当前状态</span></span></div>
<div class="ln" style="top:446px">25</div>
<div class="ln" style="top:462px">26</div>
<div class="code" style="top:462px">   <span class="k">PROCESS</span> (clk)</div>
<div class="ln" style="top:478px">27</div>
<div class="code" style="top:478px">   <span class="k">BEGIN</span></div>
<div class="ln" style="top:494px">28</div>
<div class="code" style="top:494px">      <span class="k">IF</span> (clk&#x27;<span class="k">EVENT</span> <span class="y">AND</span> clk = &#x27;<span class="n">1</span>&#x27;) <span class="k">THEN</span></div>
<div class="ln" style="top:510px">29</div>
<div class="code" style="top:510px">         <span class="k">IF</span> (esc = &#x27;<span class="n">1</span>&#x27;) <span class="k">THEN</span></div>
<div class="a" style="left:543px;top:128px;width:11px;height:11px;border:1px solid #000;background:#fff"></div>
<div class="a" style="left:545px;top:133px;width:7px;height:1px;background:#000;"></div>
<div class="a" style="left:543px;top:144px;width:11px;height:11px;border:1px solid #000;background:#fff"></div>
<div class="a" style="left:545px;top:149px;width:7px;height:1px;background:#000;"></div>
<div class="a" style="left:543px;top:352px;width:11px;height:11px;border:1px solid #000;background:#fff"></div>
<div class="a" style="left:545px;top:357px;width:7px;height:1px;background:#000;"></div>
<div class="a" style="left:543px;top:400px;width:11px;height:11px;border:1px solid #000;background:#fff"></div>
<div class="a" style="left:545px;top:405px;width:7px;height:1px;background:#000;"></div>
<div class="a" style="left:543px;top:464px;width:11px;height:11px;border:1px solid #000;background:#fff"></div>
<div class="a" style="left:545px;top:469px;width:7px;height:1px;background:#000;"></div>
<div class="a" style="left:543px;top:496px;width:11px;height:11px;border:1px solid #000;background:#fff"></div>
<div class="a" style="left:545px;top:501px;width:7px;height:1px;background:#000;"></div>
<div class="a" style="left:543px;top:512px;width:11px;height:11px;border:1px solid #000;background:#fff"></div>
<div class="a" style="left:545px;top:517px;width:7px;height:1px;background:#000;"></div>
<div class="a" style="left:548px;top:157px;width:1px;height:185px;background:#000;"></div>
<div class="a" style="left:548px;top:309px;width:6px;height:1px;background:#000;"></div>
<div class="a" style="left:548px;top:341px;width:6px;height:1px;background:#000;"></div>
<div class="a" style="left:548px;top:365px;width:1px;height:25px;background:#000;"></div>
<div class="a" style="left:548px;top:389px;width:6px;height:1px;background:#000;"></div>
<div class="a" style="left:548px;top:413px;width:1px;height:48px;background:#000;"></div>
<div class="a" style="left:548px;top:477px;width:1px;height:16px;background:#000;"></div>
<div class="a" style="left:548px;top:525px;width:1px;height:4px;background:#000;"></div>
</body></html>
